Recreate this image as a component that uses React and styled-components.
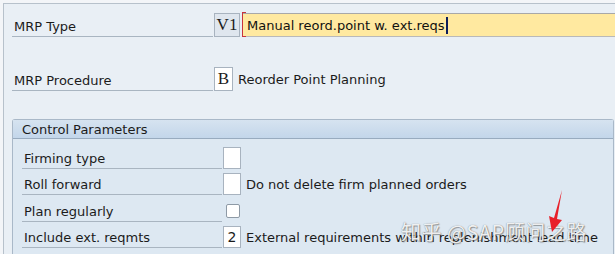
import React from "react";
import styled, { createGlobalStyle } from "styled-components";

const Global = createGlobalStyle`
  body {
    margin: 0;
    background: #f3f5f8;
    font-family: "DejaVu Sans", "Noto Sans CJK SC", sans-serif;
  }
`;

const Screen = styled.div`
  position: relative;
  width: 612px;
  height: 251px;
  margin: 3px 0 0 3px;
  border-top: 1px solid #b7c1cb;
  border-left: 1px solid #b7c1cb;
  background: #e9eff5;
  padding: 9px 0 0 8px;
  box-sizing: border-box;
  overflow: hidden;
`;

const Row = styled.div`
  display: flex;
  align-items: center;
  height: ${p => p.h || 24}px;
  margin-bottom: ${p => p.mb || 0}px;
`;

const Label = styled.div`
  width: ${p => p.w}px;
  height: 100%;
  box-sizing: border-box;
  padding: 0 0 2px 2px;
  display: flex;
  align-items: flex-end;
  border-bottom: 1px solid #a9b5c1;
  font-size: 13px;
  color: #1b1b1b;
  flex-shrink: 0;
`;

const KeyBox = styled.div`
  width: ${p => p.w}px;
  height: ${p => p.h || 24}px;
  box-sizing: border-box;
  margin-left: ${p => p.ml || 1}px;
  border: 1px solid #a8b3bf;
  background: ${p => (p.readOnly ? "#dfe6ee" : "#ffffff")};
  font-family: ${p => (p.mono ? '"Liberation Serif", "DejaVu Serif", serif' : '"DejaVu Sans", sans-serif')};
  font-size: ${p => (p.mono ? 17 : 14)}px;
  color: #1b1b1b;
  display: flex;
  align-items: center;
  justify-content: center;
  flex-shrink: 0;
`;

const EditField = styled.div`
  position: relative;
  flex: 1;
  height: 22px;
  margin: 0 0 0 2px;
  background: #ffe9a0;
  border-top: 1px solid #a8a8a8;
  border-bottom: 1px solid #b9b9b9;
  display: flex;
  align-items: center;
  padding-left: 5px;
  font-size: 13px;
  color: #111;
`;

const Bracket = styled.span`
  position: absolute;
  left: 0;
  top: -2px;
  width: 4px;
  height: 25px;
  border: 1.5px solid #c8343c;
  border-right: none;
  box-sizing: border-box;
`;

const Caret = styled.span`
  display: inline-block;
  width: 2px;
  height: 17px;
  background: #0c1d5a;
  margin-left: 1px;
`;

const Desc = styled.span`
  margin-left: 5px;
  font-size: 13px;
  color: #1b1b1b;
  white-space: nowrap;
`;

const Group = styled.div`
  margin-top: 28px;
  width: 600px;
  border: 1px solid #a9b8c8;
  border-bottom: none;
  border-radius: 3px 3px 0 0;
  background: #dde8f2;
  height: 140px;
`;

const GroupHead = styled.div`
  height: 18px;
  background: linear-gradient(#d6e3f0, #c3d6ea);
  border-bottom: 1px solid #98abbf;
  font-size: 13px;
  color: #1b1b1b;
  padding-left: 9px;
  line-height: 20px;
`;

const GroupBody = styled.div`
  padding: 8px 0 0 9px;
`;

const Check = styled.div`
  width: 14px;
  height: 14px;
  margin-left: 4px;
  box-sizing: border-box;
  border: 1px solid #8e9aa6;
  background: #ffffff;
  border-radius: 2px;
`;

const Watermark = styled.div`
  position: absolute;
  left: 397px;
  top: 213px;
  font-size: 20px;
  letter-spacing: 0.5px;
  color: rgba(255, 255, 255, 0.9);
  text-shadow: 0 0 1px rgba(80, 80, 80, 0.7), 1px 1px 1px rgba(80, 80, 80, 0.5);
  white-space: nowrap;
  font-family: "Noto Sans CJK SC", "DejaVu Sans", sans-serif;
`;

const Arrow = styled.svg`
  position: absolute;
  left: 536px;
  top: 184px;
`;

export default function App() {
  return (
    <>
      <Global />
      <Screen>
        <Row h={24} mb={30}>
          <Label w={201}>MRP Type</Label>
          <KeyBox w={26} readOnly mono>V1</KeyBox>
          <EditField>
            <Bracket />
            Manual reord.point w. ext.reqs<Caret />
          </EditField>
        </Row>
        <Row h={24}>
          <Label w={201}>MRP Procedure</Label>
          <KeyBox w={19} mono>B</KeyBox>
          <Desc>Reorder Point Planning</Desc>
        </Row>
        <Group>
          <GroupHead>Control Parameters</GroupHead>
          <GroupBody>
            <Row h={22} mb={4}>
              <Label w={200}>Firming type</Label>
              <KeyBox w={18} h={22}></KeyBox>
            </Row>
            <Row h={22} mb={5}>
              <Label w={200}>Roll forward</Label>
              <KeyBox w={18} h={22}></KeyBox>
              <Desc>Do not delete firm planned orders</Desc>
            </Row>
            <Row h={22} mb={4}>
              <Label w={200}>Plan regularly</Label>
              <Check />
            </Row>
            <Row h={22}>
              <Label w={200}>Include ext. reqmts</Label>
              <KeyBox w={18} h={22}>2</KeyBox>
              <Desc>External requirements within replenishment lead time</Desc>
            </Row>
          </GroupBody>
        </Group>
        <Watermark>知乎 @SAP顾问之路</Watermark>
        <Arrow width="30" height="46" viewBox="0 0 30 46">
          <path d="M22 2 L14 30 L9 28 L12 44 L22 32 L17 31 Z" fill="#e8202a" />
        </Arrow>
      </Screen>
    </>
  );
}
